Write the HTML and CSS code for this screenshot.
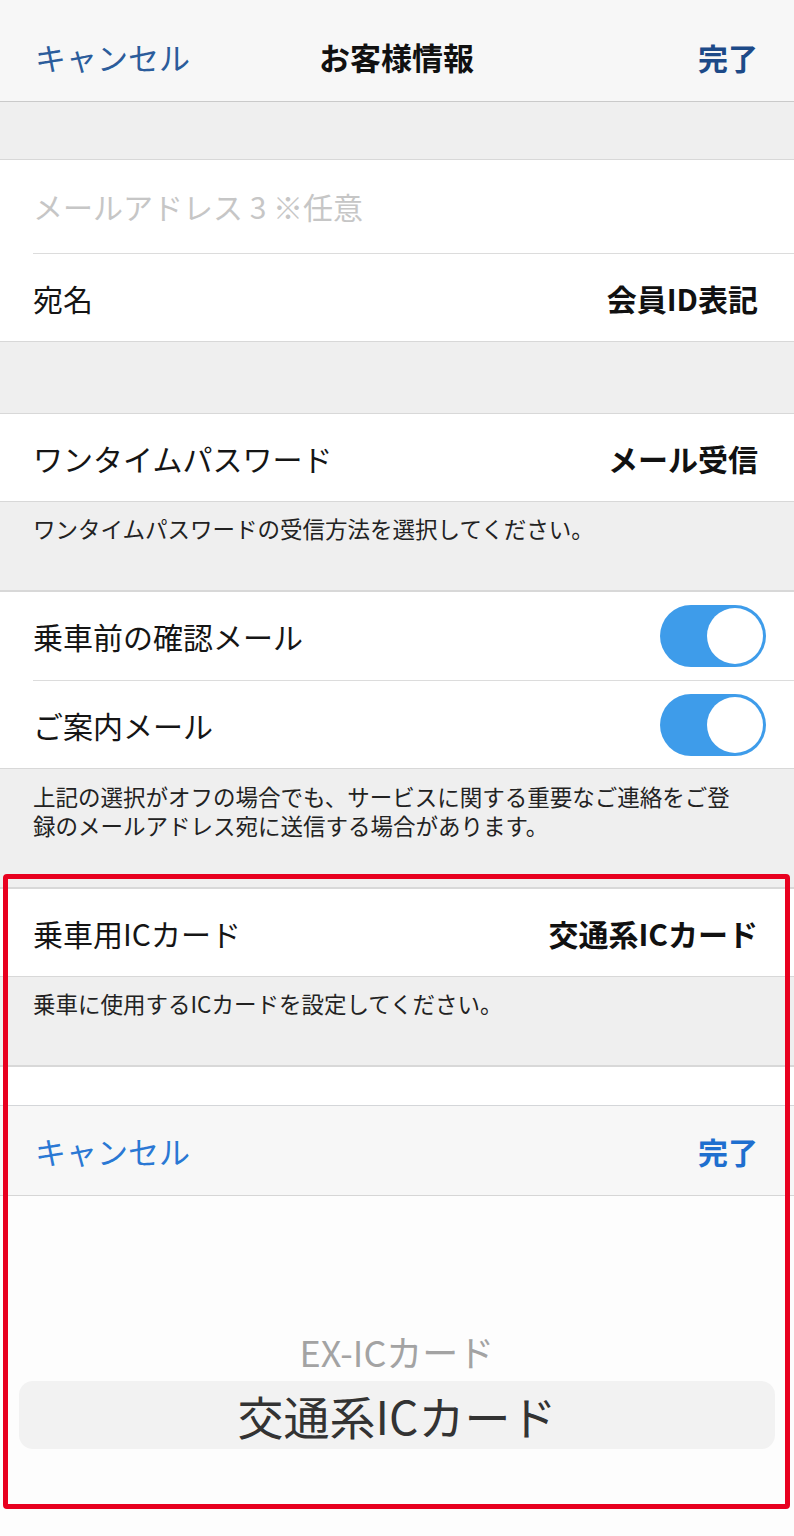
FILE: index.html
```html
<!DOCTYPE html>
<html lang="ja">
  <head>
    <meta charset="UTF-8" />
    <meta name="viewport" content="width=device-width, initial-scale=1.0" />
    <title>お客様情報</title>
    <link rel="stylesheet" href="styles.css">
  </head>

  <body>
    <div class="screen">
      <!-- top navigation -->
      <div class="navbar">
        <span class="nav-btn cancel">キャンセル</span>
        <span class="nav-title">お客様情報</span>
        <span class="nav-btn done">完了</span>
      </div>

      <div class="gap gap-top"></div>

      <div class="group">
        <div class="row row-tall">
          <span class="placeholder">メールアドレス 3 ※任意</span>
        </div>
        <div class="row">
          <span class="label">宛名</span>
          <span class="value">会員ID表記</span>
        </div>
      </div>

      <div class="gap gap-mid"></div>

      <div class="group">
        <div class="row">
          <span class="label">ワンタイムパスワード</span>
          <span class="value">メール受信</span>
        </div>
      </div>
      <div class="footer">
        <p>ワンタイムパスワードの受信方法を選択してください。</p>
      </div>

      <div class="group">
        <div class="row row-switch">
          <span class="label">乗車前の確認メール</span>
          <span class="switch"><span class="knob"></span></span>
        </div>
        <div class="row row-switch">
          <span class="label">ご案内メール</span>
          <span class="switch"><span class="knob"></span></span>
        </div>
      </div>
      <div class="footer footer-long">
        <p>上記の選択がオフの場合でも、サービスに関する重要なご連絡をご登録のメールアドレス宛に送信する場合があります。</p>
      </div>

      <div class="group">
        <div class="row">
          <span class="label">乗車用ICカード</span>
          <span class="value">交通系ICカード</span>
        </div>
      </div>
      <div class="footer">
        <p>乗車に使用するICカードを設定してください。</p>
      </div>

      <div class="group group-cut">
        <div class="row row-cut"></div>
      </div>

      <!-- picker sheet -->
      <div class="picker">
        <div class="picker-bar">
          <span class="picker-btn">キャンセル</span>
          <span class="picker-btn done">完了</span>
        </div>
        <div class="wheel">
          <div class="wheel-item">EX-ICカード</div>
          <div class="wheel-selected">交通系ICカード</div>
        </div>
      </div>

      <!-- annotation frame -->
      <div class="highlight"></div>
    </div>
  </body>
</html>
```

FILE: styles.css
```css
* {
  margin: 0;
  padding: 0;
  box-sizing: border-box;
}

body {
  font-family: "Noto Sans CJK JP", "Noto Sans", sans-serif;
  background-color: #ffffff;
  color: #111111;
}

.screen {
  position: relative;
  width: 794px;
  height: 1536px;
  overflow: hidden;
  background-color: #efefef;
}

/* navigation */
.navbar {
  display: grid;
  grid-template-columns: 1fr auto 1fr;
  align-items: center;
  height: 102px;
  padding: 12px 36px 0 35px;
  background-color: #f7f7f7;
  border-bottom: 1px solid #cacaca;
}

.nav-btn {
  font-size: 31px;
  line-height: 40px;
  color: #2b5c9b;
}

.nav-btn.done {
  justify-self: end;
  font-weight: 700;
  font-size: 30px;
  color: #1d4a88;
}

.nav-title {
  font-size: 31px;
  line-height: 40px;
  font-weight: 700;
  color: #111111;
}

.gap {
  background-color: #efefef;
}

.gap-top {
  height: 57px;
}

.gap-mid {
  height: 71px;
}

/* grouped rows */
.group {
  background-color: #ffffff;
  padding-left: 33px;
  border-top: 1px solid #d8d8d8;
  border-bottom: 1px solid #d8d8d8;
}

.row {
  display: flex;
  align-items: center;
  justify-content: space-between;
  height: 87px;
  padding-right: 36px;
}

.row + .row {
  border-top: 1px solid #dcdcdc;
  height: 88px;
}

.row-tall {
  height: 93px;
  padding-bottom: 2px;
}

.row-switch {
  height: 88px;
  padding-right: 28px;
}

.label {
  font-size: 30px;
  line-height: 40px;
  color: #151515;
}

.placeholder {
  font-size: 30px;
  line-height: 40px;
  color: #c6c6c6;
}

.value {
  font-size: 30px;
  line-height: 40px;
  font-weight: 700;
  color: #111111;
}

.switch {
  display: flex;
  justify-content: flex-end;
  align-items: center;
  width: 106px;
  height: 62px;
  padding: 3px;
  border-radius: 31px;
  background-color: #3e9cea;
}

.knob {
  width: 56px;
  height: 56px;
  border-radius: 50%;
  background-color: #ffffff;
}

/* section footers */
.footer {
  height: 89px;
  padding: 11px 50px 0 33px;
  border-bottom: 1px solid #d8d8d8;
}

.footer p {
  font-size: 22.5px;
  line-height: 30px;
  color: #222222;
}

.footer-long {
  height: 119px;
  padding-top: 13px;
}

.footer-long p {
  line-height: 29px;
}

.group-cut {
  border-bottom: none;
}

.row-cut {
  height: 38px;
}

/* picker sheet */
.picker {
  background-color: #fdfdfd;
  height: 432px;
  display: flex;
  flex-direction: column;
}

.picker-bar {
  display: flex;
  align-items: center;
  justify-content: space-between;
  height: 91px;
  padding: 0 36px 0 35px;
  background-color: #f7f7f7;
  border-top: 1px solid #d4d6d9;
  border-bottom: 1px solid #d6d6d6;
}

.picker-btn {
  font-size: 31px;
  line-height: 40px;
  color: #2a78d4;
}

.picker-btn.done {
  font-weight: 700;
  font-size: 30px;
  color: #1f6fcf;
}

.wheel {
  flex: 1;
  display: flex;
  flex-direction: column;
  justify-content: flex-end;
  padding: 0 19px 88px;
}

.wheel-item {
  height: 60px;
  line-height: 60px;
  text-align: center;
  font-size: 36px;
  color: #a3a3a3;
}

.wheel-selected {
  height: 68px;
  line-height: 68px;
  text-align: center;
  font-size: 46px;
  color: #333333;
  background-color: #f2f2f2;
  border-radius: 14px;
}

/* red annotation frame */
.highlight {
  position: absolute;
  left: 3px;
  top: 874px;
  width: 787px;
  height: 635px;
  border: 5px solid #e8001f;
  border-radius: 4px;
  pointer-events: none;
}
```
